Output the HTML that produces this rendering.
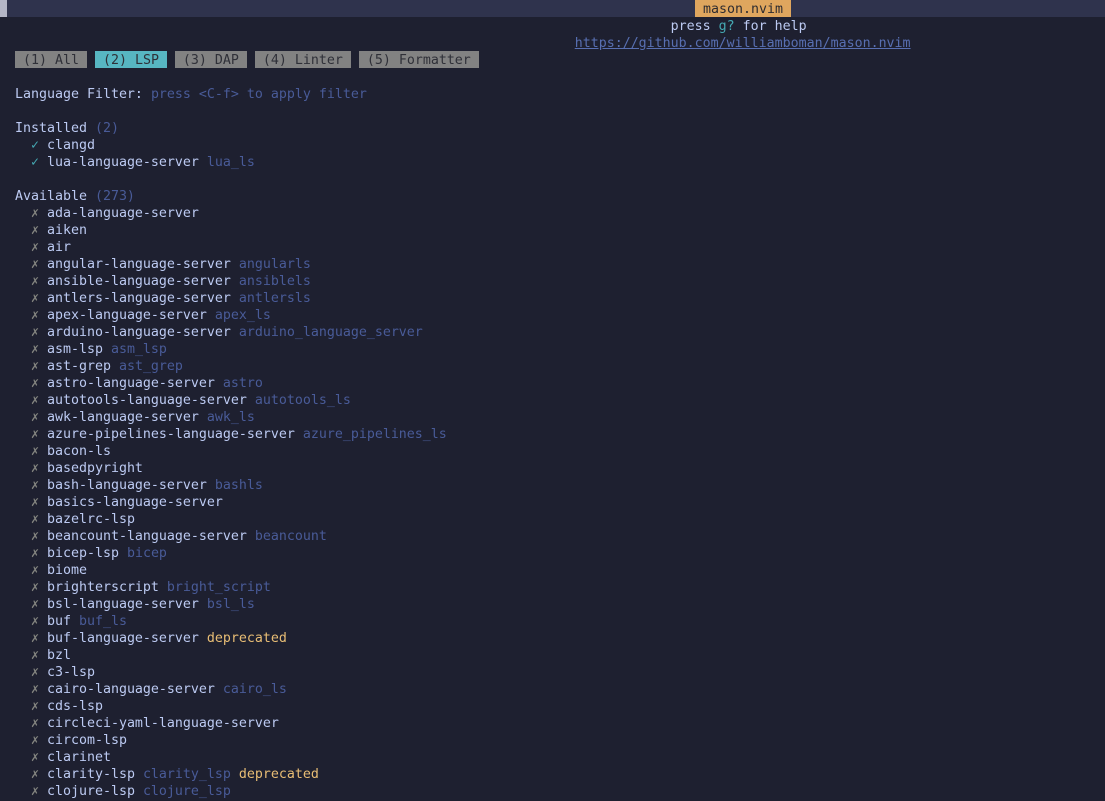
<!DOCTYPE html>
<html><head><meta charset="utf-8">
<style>
html,body{margin:0;padding:0;background:#1e2030;width:1105px;height:801px;overflow:hidden}
body{position:relative;font-family:"DejaVu Sans Mono","Liberation Mono",monospace;font-size:13.29px;color:#bccaf2}
.bar{position:absolute;left:0;top:0;width:1105px;height:17px;background:#2f334d}
.cur{position:absolute;left:0;top:0;width:7px;height:17px;background:#b4b6c6}
.t{position:absolute;left:695px;top:0;width:96px;height:17px;background:#dfa65e;color:#2e2c30;line-height:19px;white-space:pre}
#m{position:absolute;left:-1px;top:0;margin:0;font:inherit;white-space:pre}
.l{height:17px;line-height:19px;white-space:pre}
.c{color:#495b98}
.k{color:#45a9b3}
.x{color:#83847f}
.d{color:#e8bd75}
.a{color:#586fb2;text-decoration:underline}
.tab{display:inline-block;height:17px;background:#828282;color:#2f3038;vertical-align:top}
.on{background:#57b6c2}
</style></head><body>
<div class="bar"></div><div class="cur"></div>
<div class="t"> mason.nvim </div>
<div id="m"><div class="l"> </div><div class="l">                                                                                    press <span class="k">g?</span> for help</div><div class="l">                                                                        <span class="a">https://github.com/williamboman/mason.nvim</span></div><div class="l">  <span class="tab"> (1) All </span> <span class="tab on"> (2) LSP </span> <span class="tab"> (3) DAP </span> <span class="tab"> (4) Linter </span> <span class="tab"> (5) Formatter </span></div><div class="l"> </div><div class="l">  Language Filter: <span class="c">press &lt;C-f&gt; to apply filter</span></div><div class="l"> </div><div class="l">  Installed <span class="c">(2)</span></div><div class="l">    <span class="k">✓</span> clangd</div><div class="l">    <span class="k">✓</span> lua-language-server <span class="c">lua_ls</span></div><div class="l"> </div><div class="l">  Available <span class="c">(273)</span></div><div class="l">    <span class="x">✗</span> ada-language-server</div><div class="l">    <span class="x">✗</span> aiken</div><div class="l">    <span class="x">✗</span> air</div><div class="l">    <span class="x">✗</span> angular-language-server <span class="c">angularls</span></div><div class="l">    <span class="x">✗</span> ansible-language-server <span class="c">ansiblels</span></div><div class="l">    <span class="x">✗</span> antlers-language-server <span class="c">antlersls</span></div><div class="l">    <span class="x">✗</span> apex-language-server <span class="c">apex_ls</span></div><div class="l">    <span class="x">✗</span> arduino-language-server <span class="c">arduino_language_server</span></div><div class="l">    <span class="x">✗</span> asm-lsp <span class="c">asm_lsp</span></div><div class="l">    <span class="x">✗</span> ast-grep <span class="c">ast_grep</span></div><div class="l">    <span class="x">✗</span> astro-language-server <span class="c">astro</span></div><div class="l">    <span class="x">✗</span> autotools-language-server <span class="c">autotools_ls</span></div><div class="l">    <span class="x">✗</span> awk-language-server <span class="c">awk_ls</span></div><div class="l">    <span class="x">✗</span> azure-pipelines-language-server <span class="c">azure_pipelines_ls</span></div><div class="l">    <span class="x">✗</span> bacon-ls</div><div class="l">    <span class="x">✗</span> basedpyright</div><div class="l">    <span class="x">✗</span> bash-language-server <span class="c">bashls</span></div><div class="l">    <span class="x">✗</span> basics-language-server</div><div class="l">    <span class="x">✗</span> bazelrc-lsp</div><div class="l">    <span class="x">✗</span> beancount-language-server <span class="c">beancount</span></div><div class="l">    <span class="x">✗</span> bicep-lsp <span class="c">bicep</span></div><div class="l">    <span class="x">✗</span> biome</div><div class="l">    <span class="x">✗</span> brighterscript <span class="c">bright_script</span></div><div class="l">    <span class="x">✗</span> bsl-language-server <span class="c">bsl_ls</span></div><div class="l">    <span class="x">✗</span> buf <span class="c">buf_ls</span></div><div class="l">    <span class="x">✗</span> buf-language-server <span class="d">deprecated</span></div><div class="l">    <span class="x">✗</span> bzl</div><div class="l">    <span class="x">✗</span> c3-lsp</div><div class="l">    <span class="x">✗</span> cairo-language-server <span class="c">cairo_ls</span></div><div class="l">    <span class="x">✗</span> cds-lsp</div><div class="l">    <span class="x">✗</span> circleci-yaml-language-server</div><div class="l">    <span class="x">✗</span> circom-lsp</div><div class="l">    <span class="x">✗</span> clarinet</div><div class="l">    <span class="x">✗</span> clarity-lsp <span class="c">clarity_lsp</span> <span class="d">deprecated</span></div><div class="l">    <span class="x">✗</span> clojure-lsp <span class="c">clojure_lsp</span></div></div>
</body></html>
